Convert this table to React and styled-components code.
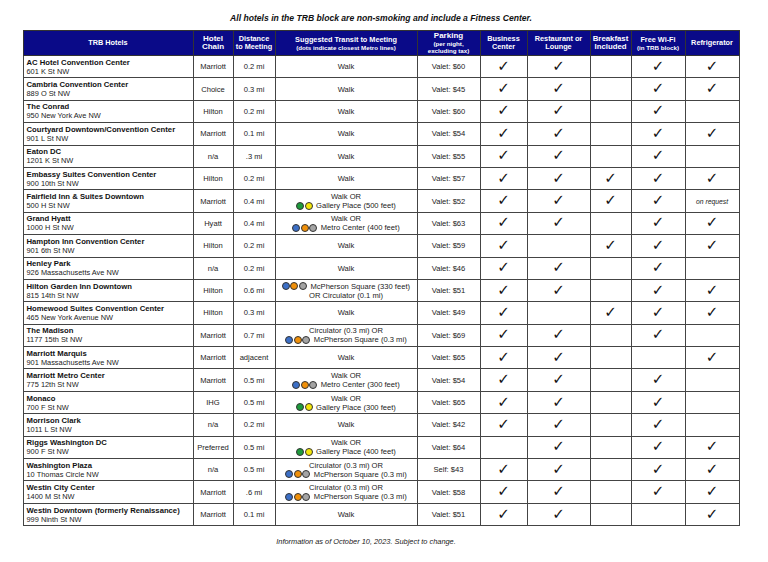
import React from "react";
import styled, { createGlobalStyle } from "styled-components";

const Global = createGlobalStyle`
  html, body { margin: 0; padding: 0; background: #fff; }
  body { font-family: "Liberation Sans", Arial, sans-serif; color: #111; }
`;

const Page = styled.div`
  width: 768px;
  height: 562px;
  box-sizing: border-box;
  padding: 13px 0 0 23px;
`;

const Sheet = styled.div`
  width: 716px;
  display: flex;
  flex-direction: column;
  align-items: center;
`;

const Title = styled.div`
  font-size: 8.6px;
  line-height: 10px;
  font-weight: bold;
  font-style: italic;
  margin-bottom: 7px;
`;

const Table = styled.table`
  width: 716px;
  border-collapse: collapse;
  table-layout: fixed;
  border: 1px solid #333;
`;

const HeadCell = styled.th`
  background: #0a0a88;
  color: #fff;
  font-weight: bold;
  font-size: ${(p) => p.$size || 7.3}px;
  line-height: 8px;
  text-align: center;
  vertical-align: middle;
  border: 1px solid #333;
  height: 24px;
  padding: 0 1px;
`;

const Sub = styled.span`
  display: block;
  font-size: 6.2px;
  line-height: 7px;
`;

const Row = styled.tr`
  height: 22.4px;
`;

const Cell = styled.td`
  border: 1px solid #444;
  font-size: 7.6px;
  line-height: 9px;
  text-align: center;
  vertical-align: middle;
  padding: 0;
  color: #222;
`;

const NameCell = styled(Cell)`
  text-align: left;
  padding-left: 3px;
`;

const HotelName = styled.div`
  font-weight: bold;
  font-size: 7.7px;
  line-height: 9px;
  color: #111;
`;

const Address = styled.div`
  font-size: 7.4px;
  line-height: 9px;
`;

const TransitLine = styled.div`
  display: flex;
  align-items: center;
  justify-content: center;
  gap: 2px;
  line-height: 9px;
`;

const Dots = styled.span`
  display: inline-flex;
  margin-right: 1px;
`;

const Dot = styled.span`
  display: inline-block;
  width: 6px;
  height: 6px;
  border-radius: 50%;
  border: 0.8px solid #333;
  background: ${(p) => p.$c};
  margin-right: 0.5px;
`;

const Check = styled.span`
  font-family: "DejaVu Sans", sans-serif;
  font-size: 15px;
  line-height: 10px;
  color: #111;
`;

const OnRequest = styled.span`
  font-style: italic;
  font-size: 6.8px;
`;

const Footer = styled.div`
  font-size: 7.4px;
  font-style: italic;
  line-height: 9px;
  margin-top: 11px;
  margin-right: 30px;
  color: #222;
`;

const COLORS = { g: "#1d9a3c", y: "#f3e60a", b: "#3c6fc6", o: "#f0900a", s: "#a4a4a4" };

const cols = [170, 40, 42, 142, 63, 47, 63, 41, 54, 54];

const W = "Walk";
const rows = [
  ["AC Hotel Convention Center", "601 K St NW", "Marriott", "0.2 mi", W, "Valet: $60", "11011"],
  ["Cambria Convention Center", "889 O St NW", "Choice", "0.3 mi", W, "Valet: $45", "11011"],
  ["The Conrad", "950 New York Ave NW", "Hilton", "0.2 mi", W, "Valet: $60", "11010"],
  ["Courtyard Downtown/Convention Center", "901 L St NW", "Marriott", "0.1 mi", W, "Valet: $54", "11011"],
  ["Eaton DC", "1201 K St NW", "n/a", ".3 mi", W, "Valet: $55", "11010"],
  ["Embassy Suites Convention Center", "900 10th St NW", "Hilton", "0.2 mi", W, "Valet: $57", "11111"],
  ["Fairfield Inn & Suites Downtown", "500 H St NW", "Marriott", "0.4 mi", [["", "Walk OR"], ["gy", "Gallery Place (500 feet)"]], "Valet: $52", "1111r"],
  ["Grand Hyatt", "1000 H St NW", "Hyatt", "0.4 mi", [["", "Walk OR"], ["bos", "Metro Center (400 feet)"]], "Valet: $63", "11011"],
  ["Hampton Inn Convention Center", "901 6th St NW", "Hilton", "0.2 mi", W, "Valet: $59", "10111"],
  ["Henley Park", "926 Massachusetts Ave NW", "n/a", "0.2 mi", W, "Valet: $46", "11010"],
  ["Hilton Garden Inn Downtown", "815 14th St NW", "Hilton", "0.6 mi", [["bos", "McPherson Square (330 feet)"], ["", "OR Circulator (0.1 mi)"]], "Valet: $51", "11011"],
  ["Homewood Suites Convention Center", "465 New York Avenue NW", "Hilton", "0.3 mi", W, "Valet: $49", "10111"],
  ["The Madison", "1177 15th St NW", "Marriott", "0.7 mi", [["", "Circulator (0.3 mi) OR"], ["bos", "McPherson Square (0.3 mi)"]], "Valet: $69", "11010"],
  ["Marriott Marquis", "901 Massachusetts Ave NW", "Marriott", "adjacent", W, "Valet: $65", "11001"],
  ["Marriott Metro Center", "775 12th St NW", "Marriott", "0.5 mi", [["", "Walk OR"], ["bos", "Metro Center (300 feet)"]], "Valet: $54", "11010"],
  ["Monaco", "700 F St NW", "IHG", "0.5 mi", [["", "Walk OR"], ["gy", "Gallery Place (300 feet)"]], "Valet: $65", "11010"],
  ["Morrison Clark", "1011 L St NW", "n/a", "0.2 mi", W, "Valet: $42", "11010"],
  ["Riggs Washington DC", "900 F St NW", "Preferred", "0.5 mi", [["", "Walk OR"], ["gy", "Gallery Place (400 feet)"]], "Valet: $64", "01011"],
  ["Washington Plaza", "10 Thomas Circle NW", "n/a", "0.5 mi", [["", "Circulator (0.3 mi) OR"], ["bos", "McPherson Square (0.3 mi)"]], "Self: $43", "11011"],
  ["Westin City Center", "1400 M St NW", "Marriott", ".6 mi", [["", "Circulator (0.3 mi) OR"], ["bos", "McPherson Square (0.3 mi)"]], "Valet: $58", "11011"],
  ["Westin Downtown (formerly Renaissance)", "999 Ninth St NW", "Marriott", "0.1 mi", W, "Valet: $51", "11001"],
];

function Transit({ value }) {
  if (typeof value === "string") return value;
  return value.map(([dots, text], i) => (
    <TransitLine key={i}>
      {dots && (
        <Dots>
          {dots.split("").map((d, j) => (
            <Dot key={j} $c={COLORS[d]} />
          ))}
        </Dots>
      )}
      <span>{text}</span>
    </TransitLine>
  ));
}

function Flag({ v }) {
  if (v === "1") return <Check>✓</Check>;
  if (v === "r") return <OnRequest>on request</OnRequest>;
  return null;
}

export default function App() {
  return (
    <Page>
      <Global />
      <Sheet>
        <Title>All hotels in the TRB block are non-smoking and include a Fitness Center.</Title>
        <Table>
          <colgroup>
            {cols.map((w, i) => (
              <col key={i} style={{ width: w }} />
            ))}
          </colgroup>
          <thead>
            <tr>
              <HeadCell>TRB Hotels</HeadCell>
              <HeadCell $size={8}>Hotel<br />Chain</HeadCell>
              <HeadCell>Distance<br />to Meeting</HeadCell>
              <HeadCell>
                Suggested Transit to Meeting
                <Sub>(dots indicate closest Metro lines)</Sub>
              </HeadCell>
              <HeadCell $size={8}>
                Parking
                <Sub>(per night,<br />excluding tax)</Sub>
              </HeadCell>
              <HeadCell>Business<br />Center</HeadCell>
              <HeadCell>Restaurant or<br />Lounge</HeadCell>
              <HeadCell $size={7.8}>Breakfast<br />Included</HeadCell>
              <HeadCell>
                Free Wi-Fi
                <Sub>(in TRB block)</Sub>
              </HeadCell>
              <HeadCell>Refrigerator</HeadCell>
            </tr>
          </thead>
          <tbody>
            {rows.map((r) => (
              <Row key={r[0]}>
                <NameCell>
                  <HotelName>{r[0]}</HotelName>
                  <Address>{r[1]}</Address>
                </NameCell>
                <Cell>{r[2]}</Cell>
                <Cell>{r[3]}</Cell>
                <Cell>
                  <Transit value={r[4]} />
                </Cell>
                <Cell>{r[5]}</Cell>
                {r[6].split("").map((v, i) => (
                  <Cell key={i}>
                    <Flag v={v} />
                  </Cell>
                ))}
              </Row>
            ))}
          </tbody>
        </Table>
        <Footer>Information as of October 10, 2023. Subject to change.</Footer>
      </Sheet>
    </Page>
  );
}
